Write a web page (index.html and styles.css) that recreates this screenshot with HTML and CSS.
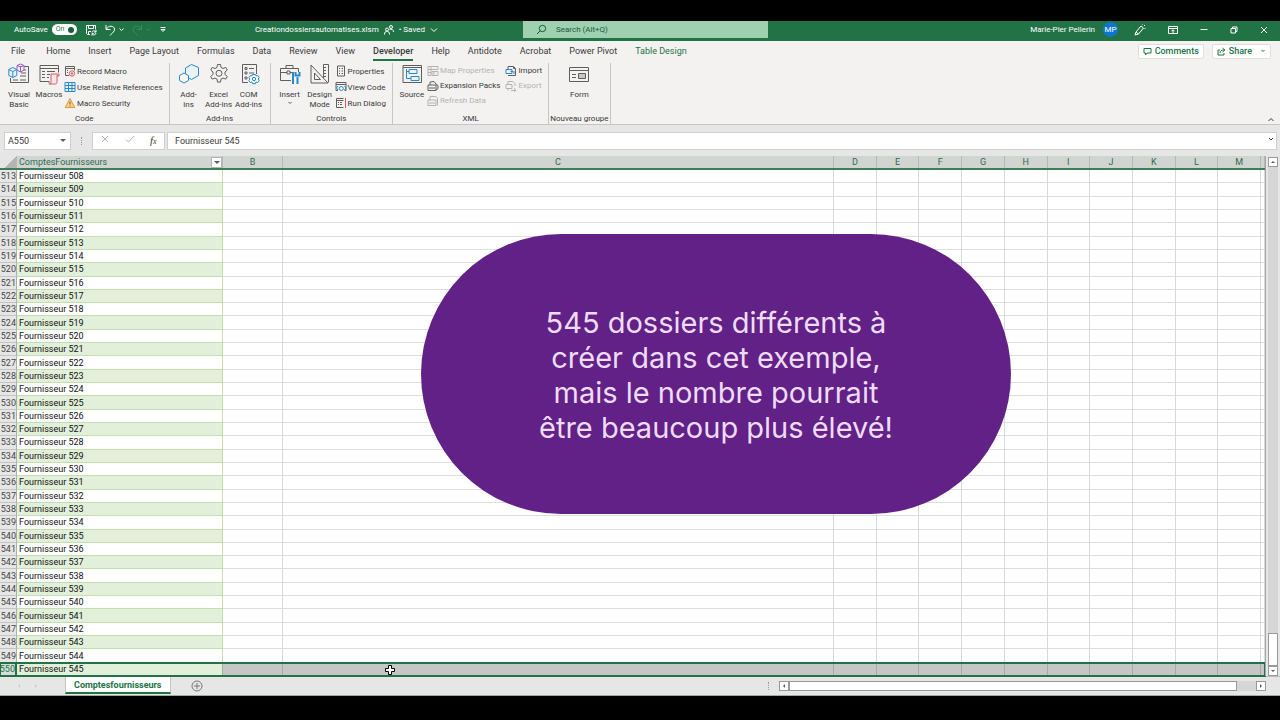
FILE: index.html
```html
<!DOCTYPE html>
<html lang="en">
<head>
    <meta charset="UTF-8">
    <meta name="viewport" content="width=device-width, initial-scale=1.0">
    <title>Creationdossiersautomatises.xlsm</title>
    <link rel="stylesheet" href="styles.css">
</head>
<body>
    <div class="app">
        <header class="title-bar">
            <div class="title-left">
                <label class="autosave">
                    AutoSave
                    <span class="switch">On <input type="checkbox" checked></span>
                </label>
                <button class="icon-btn" title="Save">
                    <svg width="12" height="12" viewBox="0 0 12 12"><path d="M1.5 1.5h9v4M1.5 1.5v8l1 1H5M3.5 1.5v3h5v-3M3.5 10.5V7.5H6M7 8.5a2 2 0 0 1 3.5-1M11 6v2H9M11 9a2 2 0 0 1-3.5 1.2M7 11.5v-1.8h1.8"/></svg>
                </button>
                <button class="icon-btn undo" title="Undo">
                    <svg width="20" height="12" viewBox="0 0 20 12"><path d="M2 1v4.500h4.500M2.300 5.200C4.500 1 10 1.500 10.500 5c.300 2.500-2 3.500-4.500 6.500M15.500 4.500l2 2 2-2"/></svg>
                </button>
                <button class="icon-btn redo" title="Redo" disabled>
                    <svg width="20" height="12" viewBox="0 0 20 12"><path d="M10.500 1v4.500H6M10.200 5.200C8 1 2.500 1.500 2 5c-.300 2.500 2 3.500 4.500 6.500M15.500 4.500l2 2 2-2"/></svg>
                </button>
                <button class="icon-btn" title="Customize Quick Access Toolbar">
                    <svg width="8" height="8" viewBox="0 0 8 8"><path d="M1.500 1.500h5M2 3.500h4L4 5.500z"/></svg>
                </button>
                <div class="doc-title">
                    <span>Creationdossiersautomatises.xlsm</span>
                    <svg width="10" height="10" viewBox="0 0 10 10"><circle cx="3" cy="4.500" r="1.500"/><circle cx="7" cy="2" r="1.500"/><path d="M.500 9.500c0-4.500 5-4.500 5 0M5.500 4.500c2-1 4 0 4 2.500"/></svg>
                    <span>• Saved</span>
                    <svg width="8" height="8" viewBox="0 0 8 8"><path d="M1 2.500l3 3 3-3"/></svg>
                </div>
            </div>
            <label class="search">
                <svg width="11" height="11" viewBox="0 0 11 11"><circle cx="6.500" cy="4.500" r="3.200"/><path d="M4.200 6.800L1 10"/></svg>
                <input type="text" placeholder="Search (Alt+Q)" aria-label="Search">
            </label>
            <div class="title-right">
                <span>Marie-Pier Pellerin</span>
                <span class="avatar">MP</span>
                <button class="icon-btn" title="Ink">
                    <svg width="12" height="12" viewBox="0 0 12 12"><path d="M1 11l1-3 5-6 2.500 2-5 6zM2 8l2.500 2M8 1l.500-.500M10 2l1-1M10.500 4.500h1"/></svg>
                </button>
                <button class="icon-btn" title="Ribbon Display Options">
                    <svg width="10" height="10" viewBox="0 0 10 10"><path d="M.500 1.500h9v7h-9zM.500 3.500h9M5 8V5M3.500 6L5 4.800 6.500 6"/></svg>
                </button>
                <button class="icon-btn" title="Minimize">
                    <svg width="8" height="8" viewBox="0 0 8 8"><path d="M.500 3.500h7"/></svg>
                </button>
                <button class="icon-btn" title="Restore">
                    <svg width="8" height="8" viewBox="0 0 8 8"><path d="M1 2.500h4.500V7H1zM2.500 2.500V1H7v4.500H5.500"/></svg>
                </button>
                <button class="icon-btn" title="Close">
                    <svg width="8" height="8" viewBox="0 0 8 8"><path d="M1 1l6 6M7 1L1 7"/></svg>
                </button>
            </div>
        </header>

        <nav class="tabs">
            <a href="#">File</a>
            <a href="#">Home</a>
            <a href="#">Insert</a>
            <a href="#">Page Layout</a>
            <a href="#">Formulas</a>
            <a href="#">Data</a>
            <a href="#">Review</a>
            <a href="#">View</a>
            <a href="#" class="active">Developer</a>
            <a href="#">Help</a>
            <a href="#">Antidote</a>
            <a href="#">Acrobat</a>
            <a href="#">Power Pivot</a>
            <a href="#" class="contextual">Table Design</a>
            <div class="tab-actions">
                <button>
                    <svg width="9" height="9" viewBox="0 0 9 9"><path d="M1 1.500h7v4.500H4L2.500 8V6H1z"/></svg>
                    Comments
                </button>
                <button>
                    <svg width="9" height="9" viewBox="0 0 9 9"><path d="M3 3H1v5h6V6M3 6c0-2 1.500-3 4-3M5.500 1L8 3 5.500 5"/></svg>
                    Share
                    <svg class="share-arrow" width="6" height="6" viewBox="0 0 6 6"><path d="M1.500 2L3 3.500 4.500 2"/></svg>
                </button>
            </div>
        </nav>

        <section class="ribbon">
            <div class="group">
                <div class="group-body">
                    <button class="big">
                        <svg width="22" height="22" viewBox="0 0 22 22"><path d="M11 3.500h9.500v16h-18V15M12 7h6M13 10h5M12 13h6M5 17h5M12 17h6"/><path class="blue pale" d="M.800 6.500l4-2 4 2v6l-4 2-4-2zM.800 6.500l4 2 4-2M4.800 8.500v6"/><path class="purple pale" d="M9 2.500l3.500-1.500L16 2.500V7l-3.500 2L9 7zM9 2.500L12.500 4 16 2.500M12.500 4v5"/></svg>
                        <span>Visual<br>Basic</span>
                    </button>
                    <button class="big">
                        <svg width="22" height="22" viewBox="0 0 22 22"><path d="M11.500 18.500H2v-16h18.500v7M2 5.500h18.500M4 8.500h3M9 8.500h8M4 11.500h3M9 11.500h3M4 14.500h3M9 14.500h2"/><path class="red pale" d="M13 11h8v2h-2v6.500c0 1-1 1.500-2 1.500h-5.500c1.500-.500 1.500-1 1.500-2zM11 19v1c0 .800.800 1 1.500 1M19 13v-1"/></svg>
                        <span>Macros</span>
                    </button>
                    <div class="small-list">
                        <button><svg width="12" height="12" viewBox="0 0 12 12"><path d="M5 10.500H1.500v-9h9v4M1.500 3.500h9M3 5.500h1M3 7.500h1"/><circle class="red" cx="8" cy="8.500" r="2.700"/><circle class="red solid" cx="8" cy="8.500" r=".800"/></svg>Record Macro</button>
                        <button><svg width="12" height="12" viewBox="0 0 12 12"><path class="pale" stroke="none" d="M1 1h10v9H1z"/><path class="blue" d="M1 1.500h10v9H1zM1 4.500h10M1 7.500h10M4.500 1v9M8 1v9"/></svg>Use Relative References</button>
                        <button><svg width="12" height="12" viewBox="0 0 12 12"><path class="warn" d="M6 1.500l4.800 9H1.200z"/><path d="M6 4.500v3M6 8.500v1"/></svg>Macro Security</button>
                    </div>
                </div>
                <div class="group-name">Code</div>
            </div>

            <div class="group">
                <div class="group-body buttons-only">
                    <button class="big">
                        <svg width="22" height="22" viewBox="0 0 22 22"><path class="blue pale" d="M13.500 1.500l7 3v8l-7 4-6-3.500v-8z"/><path class="blue white" d="M6 10l4.500 2.500v5L6 20l-4.500-2.500v-5z"/></svg>
                        <span>Add-<br>ins</span>
                    </button>
                    <button class="big">
                        <svg width="22" height="22" viewBox="0 0 22 22"><path d="M9.500 1.500h3l.500 3 2 1 2.800-1.100 1.500 2.600-2.300 2v2.500l2.300 2-1.500 2.600-2.800-1-2 1-.500 3h-3l-.500-3-2-1-2.800 1-1.500-2.600 2.300-2V9L2.700 7l1.500-2.600L7 5.500l2-1z"/><circle cx="11" cy="10.300" r="3"/></svg>
                        <span>Excel<br>Add-ins</span>
                    </button>
                    <button class="big">
                        <svg width="22" height="22" viewBox="0 0 22 22"><path d="M10 19.500H4.500v-18h14V11M7 4.500h2v2H7zM11 5.500h5M7 9h2v2H7zM11 10h5M7 14h2v2H7z"/><path class="blue white" d="M14.500 11.500h3l.500 1.500 1.700-.500 1.500 2.300L20 16l1.200 1.300-1.500 2.200L18 19l-.500 1.700h-3L14 19l-1.700.500-1.500-2.200L12 16l-1.200-1.300 1.500-2.200 1.700.500z"/><circle class="blue" cx="16" cy="16" r="1.700"/></svg>
                        <span>COM<br>Add-ins</span>
                    </button>
                </div>
                <div class="group-name">Add-ins</div>
            </div>

            <div class="group">
                <div class="group-body">
                    <button class="big">
                        <svg width="22" height="22" viewBox="0 0 22 22"><path d="M12 17.500H1.500v-12h18V9M7 5V2.500h7V5M1.500 9.500H8M8 8h3v3H8zM11 9.500h2"/><path class="blue thick" d="M14 9v5M14 14v7M18.500 14v7"/><path class="blue thick" d="M16.500 9v3.500h4V9"/></svg>
                        <span>Insert</span>
                        <svg class="drop" width="6" height="6" viewBox="0 0 6 6"><path d="M1.500 2L3 3.500 4.500 2"/></svg>
                    </button>
                    <button class="big">
                        <svg width="22" height="22" viewBox="0 0 22 22"><path d="M2 2v18h17zM5.500 10v6.500h6zM14.500 1.500h5v18M14.500 1.500V15M14.500 4.500H17M14.500 7.500H17M14.500 10.500H17M14.500 13.500H17"/></svg>
                        <span>Design<br>Mode</span>
                    </button>
                    <div class="small-list">
                        <button><svg width="12" height="12" viewBox="0 0 12 12"><path d="M2.500 1h7v10h-7zM4 3.500h1M6.500 3.500H8M4 6h1M6.500 6H8M4 8.500h1M6.500 8.500H8"/></svg>Properties</button>
                        <button><svg width="12" height="12" viewBox="0 0 12 12"><path d="M3 9.500H1v-8h10v8H9.500M1 3.500h10"/><path class="blue" d="M3 5L1.500 7 3 9M9.500 5L11 7 9.500 9"/><circle class="blue" cx="6.300" cy="7.500" r="2"/></svg>View Code</button>
                        <button><svg width="12" height="12" viewBox="0 0 12 12"><path d="M8.500 10.500h-7v-9h7M1.500 3.500h7M3 5.500h1M5 5.500h2M3 7.500h1M5 7.500h2"/><path class="red" d="M10.500 1v10"/></svg>Run Dialog</button>
                    </div>
                </div>
                <div class="group-name">Controls</div>
            </div>

            <div class="group">
                <div class="group-body">
                    <button class="big">
                        <svg width="22" height="22" viewBox="0 0 22 22"><path d="M2 2.500h18.500v17H2zM2 4.500h18.500"/><path class="blue pale" d="M8 6.500h8v4H8zM10 13.500h8v4h-8zM5.500 6v9.500H10M5.500 8.500H8"/></svg>
                        <span>Source</span>
                    </button>
                    <div class="small-list tight">
                        <button disabled><svg width="12" height="12" viewBox="0 0 12 12"><path d="M1 1.500h10v3M1 1.500v9h3M1 4.500h10M4 1v9M5 6.500h6v4H5zM7 6.500v4M1 7.500h3"/></svg>Map Properties</button>
                        <button><svg width="12" height="12" viewBox="0 0 12 12"><path d="M3 5V2l4-.500L9 4M1 5h8v5.500H1zM3 7v2M5 7v2M7 7v2M9 4l2 1.500v3L9 10"/></svg>Expansion Packs</button>
                        <button disabled><svg width="12" height="12" viewBox="0 0 12 12"><path d="M3 5V1.500h6l1.500 2v7M1 5h8v5.500H1zM3 7v2M5 7v2M7 7v2"/></svg>Refresh Data</button>
                    </div>
                    <div class="small-list tight">
                        <button><svg width="12" height="12" viewBox="0 0 12 12"><path d="M3 10.500h7.500v-7l-2-2H3v3M8.500 1.500v2h2"/><path class="blue" d="M1 4.500h6v4H1zM9 9V6M5.500 6.500H8"/></svg>Import</button>
                        <button disabled><svg width="12" height="12" viewBox="0 0 12 12"><path d="M3 10.500V8.500M3 4V1.500h5l2 2V6M1 4.500h6v4H1zM6 10.500h4.500M9 8l2 2.500-2 1"/></svg>Export</button>
                    </div>
                </div>
                <div class="group-name">XML</div>
            </div>

            <div class="group">
                <div class="group-body centered">
                    <button class="big">
                        <svg width="22" height="22" viewBox="0 0 22 22"><path d="M1.500 4.500h19v14h-19zM1.500 7.500h19M4 11.500h4M4 14.500h4"/><path class="grey" d="M10.500 10.500h7v5h-7z"/></svg>
                        <span>Form</span>
                    </button>
                </div>
                <div class="group-name">Nouveau groupe</div>
            </div>
            <button class="collapse" title="Collapse the Ribbon">
                <svg width="8" height="8" viewBox="0 0 8 8"><path d="M1.500 5L4 2.500 6.500 5"/></svg>
            </button>
        </section>

        <div class="formula-bar">
            <div class="name-box">
                <input type="text" value="A550" aria-label="Name Box">
                <button title="Names"><i class="tri down"></i></button>
            </div>
            <span class="dots"></span>
            <div class="fx-box">
                <button title="Cancel" disabled><svg width="10" height="10" viewBox="0 0 10 10"><path d="M2 2l6 6M8 2L2 8"/></svg></button>
                <button title="Enter" disabled><svg width="10" height="10" viewBox="0 0 10 10"><path d="M1 5.500L3.500 8 9 2"/></svg></button>
                <button class="fx" title="Insert Function">f<sub>x</sub></button>
            </div>
            <div class="formula">
                <input type="text" value="Fournisseur 545" aria-label="Formula Bar">
                <button title="Expand"><svg width="8" height="8" viewBox="0 0 8 8"><path d="M2 3l2 2 2-2"/></svg></button>
            </div>
        </div>

        <main class="sheet">
            <table class="grid">
                <thead>
                    <tr>
                        <th class="corner"></th>
                        <th class="col-a">ComptesFournisseurs <button class="filter" title="Filter"><i class="tri down"></i></button></th>
                        <th>B</th>
                        <th>C</th>
                        <th>D</th>
                        <th>E</th>
                        <th>F</th>
                        <th>G</th>
                        <th>H</th>
                        <th>I</th>
                        <th>J</th>
                        <th>K</th>
                        <th>L</th>
                        <th>M</th>
                        <th></th>
                    </tr>
                </thead>
                <tbody id="rows"></tbody>
            </table>
            <div class="v-scroll">
                <button title="Scroll up"><i class="tri up"></i></button>
                <div class="v-track"><div class="v-thumb"></div></div>
                <button title="Scroll down"><i class="tri down"></i></button>
            </div>

            <div class="callout">545 dossiers différents à<br>créer dans cet exemple,<br>mais le nombre pourrait<br>être beaucoup plus élevé!</div>
            <svg class="cursor" width="12" height="12" viewBox="0 0 12 12"><path d="M4.500 1.500h3v3h3v3h-3v3h-3v-3h-3v-3h3z"/></svg>
        </main>

        <footer class="sheet-bar">
            <button class="nav-arrow" title="Previous sheet" disabled><i class="tri left"></i></button>
            <button class="nav-arrow" title="Next sheet" disabled><i class="tri right"></i></button>
            <button class="sheet-tab">Comptesfournisseurs</button>
            <button class="add-sheet" title="New sheet">
                <svg width="12" height="12" viewBox="0 0 12 12"><circle cx="6" cy="6" r="5"/><path d="M6 3v6M3 6h6"/></svg>
            </button>
            <span class="dots"></span>
            <div class="h-scroll">
                <button title="Scroll left"><i class="tri left"></i></button>
                <div class="h-track"><div class="h-thumb"></div></div>
                <button title="Scroll right"><i class="tri right"></i></button>
            </div>
        </footer>
    </div>

    <script src="script.js"></script>
</body>
</html>
```
FILE: styles.css
```css
* {
    box-sizing: border-box;
}

body {
    margin: 0;
    height: 100vh;
    padding: 21px 0 24px;
    background: #000;
    font-family: Roboto, 'Open Sans', sans-serif;
    font-size: 9px;
    line-height: 11px;
    color: #3b3a39;
}

button,
input {
    margin: 0;
    padding: 0;
    border: 0;
    background: none;
    font: inherit;
    color: inherit;
    outline: none;
}

svg {
    flex: none;
    fill: none;
    stroke: currentColor;
}

.app {
    height: 100%;
    display: flex;
    flex-direction: column;
    background: #e6e6e6;
}

/* Title bar */
.title-bar {
    flex: none;
    height: 20px;
    display: grid;
    grid-template-columns: 1fr 245px 512px;
    background: #217346;
    color: #fff;
    font-size: 8px;
}

.title-left,
.title-right {
    display: flex;
    align-items: center;
    padding-bottom: 3px;
    white-space: nowrap;
}

.title-left {
    padding-left: 14px;
}

.icon-btn {
    display: flex;
    align-items: center;
}

.autosave {
    display: flex;
    align-items: center;
    gap: 4px;
    margin-right: 8px;
}

.switch {
    display: flex;
    align-items: center;
    justify-content: space-between;
    width: 25px;
    height: 11px;
    padding: 0 3px 0 4px;
    border-radius: 6px;
    background: #fff;
    color: #217346;
    font-size: 7px;
}

.switch input {
    appearance: none;
    width: 6px;
    height: 6px;
    border-radius: 50%;
    background: #185c37;
}

.undo,
.redo {
    margin-left: 7px;
}

.redo {
    margin-right: 8px;
    color: #3f8b60;
}

.doc-title {
    display: flex;
    align-items: center;
    gap: 5px;
    margin-left: auto;
    margin-right: 85px;
}

.search {
    display: flex;
    align-items: center;
    gap: 9px;
    height: 17px;
    padding-left: 13px;
    background: #9fd0b2;
    color: #185c37;
}

.search input {
    flex: 1;
}

.search input::placeholder {
    color: #185c37;
    opacity: 1;
}

.title-right {
    justify-content: flex-end;
    gap: 22px;
    padding-right: 12px;
}

.avatar {
    width: 15px;
    height: 15px;
    margin-left: -14px;
    margin-right: -6px;
    border-radius: 50%;
    background: #0f75cf;
    line-height: 15px;
    text-align: center;
}

/* Ribbon tabs */
.tabs {
    flex: none;
    height: 20px;
    display: flex;
    align-items: center;
    gap: 18px;
    padding: 0 9px 0 11px;
    background: #f3f2f1;
    white-space: nowrap;
}

.tabs a {
    padding: 5px 0 2px;
    border-bottom: 2px solid transparent;
    color: #3b3a39;
    text-decoration: none;
}

.tabs a:first-child {
    margin-right: 3px;
}

.tabs .active {
    border-color: #217346;
    font-weight: 500;
}

.tabs .contextual {
    color: #217346;
}

.tab-actions {
    display: flex;
    gap: 8px;
    margin-left: auto;
}

.tab-actions button {
    display: flex;
    align-items: center;
    gap: 3px;
    height: 15px;
    padding: 0 4px;
    border: 1px solid #e1dfdd;
    border-radius: 2px;
    background: #fff;
    color: #217346;
    font-weight: 500;
}

.share-arrow {
    margin-left: 5px;
}

/* Ribbon */
.ribbon {
    flex: none;
    height: 64px;
    display: flex;
    background: #f3f2f1;
    border-bottom: 1px solid #c8c6c4;
    font-size: 8px;
}

.group {
    display: flex;
    flex-direction: column;
    justify-content: space-between;
    margin-top: 2px;
    border-right: 1px solid #c8c6c4;
    white-space: nowrap;
}

.group-body {
    display: flex;
    padding: 0 6px 0 4px;
}

.group-body.centered {
    justify-content: center;
    padding: 0 4px;
}

.group-name {
    padding: 0 1px;
    text-align: center;
}

.group svg {
    color: #605e5c;
}

.big {
    display: flex;
    flex-direction: column;
    align-items: center;
    width: 30px;
    line-height: 10px;
}

.big svg {
    margin-bottom: 5px;
}

.small-list {
    display: flex;
    flex-direction: column;
}

.small-list button {
    display: flex;
    align-items: center;
    gap: 1px;
    height: 16px;
}

.small-list.tight button {
    height: 15px;
}

.small-list button:disabled,
.small-list button:disabled svg {
    color: #b5b3b1;
}

.small-list + .small-list {
    margin-left: 5px;
}

.group .blue {
    stroke: #2b88c8;
}

.group .purple {
    stroke: #9a5cc6;
}

.group .red {
    stroke: #d65c68;
}

.group .pale {
    fill: #eaf3fa;
}

.group .red.pale {
    fill: #fbe6e8;
}

.group .white {
    fill: #f8fbfd;
}

.group .solid {
    fill: #d65c68;
}

.group .grey {
    fill: #c8c6c4;
}

.group .warn {
    fill: #fbd28a;
    stroke: #dd9a35;
}

.group .thick {
    stroke-width: 2;
}

.collapse {
    display: flex;
    align-items: flex-end;
    margin-left: auto;
    padding: 0 5px 0 0;
}

/* Formula bar */
.formula-bar {
    flex: none;
    height: 31px;
    display: flex;
    align-items: center;
    padding: 0 3px 0 4px;
}

.name-box,
.fx-box,
.formula {
    display: flex;
    align-items: center;
    height: 18px;
    border: 1px solid #cfcfcf;
    background: #fff;
}

.name-box {
    width: 67px;
    padding: 0 4px 0 3px;
}

.name-box input,
.formula input {
    flex: 1;
    min-width: 0;
    padding-top: 2px;
}

.dots {
    height: 8px;
    border-left: 1px dotted #999;
}

.formula-bar .dots {
    margin: 0 10px;
}

.fx-box {
    justify-content: space-around;
    width: 73px;
    margin-right: 2px;
}

.fx-box button:disabled {
    color: #b5b3b1;
}

.fx {
    font-family: 'Liberation Serif', serif;
    font-size: 11px;
    font-style: italic;
}

.fx sub {
    font-size: 8px;
    vertical-align: baseline;
}

.formula {
    flex: 1;
    padding: 0 1px 0 7px;
}

.tri {
    display: block;
    width: 0;
    height: 0;
    border: 3px solid transparent;
}

.tri.down {
    border-top-color: #605e5c;
    border-bottom: 0;
}

.tri.up {
    border-bottom-color: #605e5c;
    border-top: 0;
}

.tri.left {
    border-right-color: #605e5c;
    border-left: 0;
}

.tri.right {
    border-left-color: #605e5c;
    border-right: 0;
}

/* Sheet */
.sheet {
    position: relative;
    flex: 1;
    min-height: 0;
    display: flex;
}

.grid {
    flex: 1;
    display: flex;
    flex-direction: column;
    background: #fff;
    color: #222;
}

.grid tr {
    display: grid;
    grid-template-columns: 17px 206px 60px 551px repeat(10, 1fr) 4px;
    min-height: 0;
}

.grid thead {
    display: block;
}

.grid thead tr {
    height: 14px;
    border-bottom: 2px solid #3f7d5a;
}

.grid tbody {
    flex: 1;
    min-height: 0;
    display: grid;
    grid-auto-rows: 1fr;
}

.grid th,
.grid td {
    display: flex;
    align-items: center;
    min-width: 0;
    padding: 1px 0 0;
    border-right: 1px solid #d9d9d9;
    white-space: nowrap;
}

.grid td {
    border-bottom: 1px solid #dedede;
}

.grid thead th {
    justify-content: center;
    border-color: #b4bbb7;
    background: #d0d5d2;
    color: #2f6b4b;
    font-weight: 400;
}

.grid thead .corner {
    background: linear-gradient(135deg, #e6e6e6 60%, #b5b5b5 60%);
}

.grid thead .col-a {
    justify-content: space-between;
    padding-left: 2px;
}

.filter {
    display: flex;
    align-items: center;
    justify-content: center;
    width: 11px;
    height: 11px;
    border: 1px solid #b5b5b5;
    background: #fff;
}

.grid tbody th {
    justify-content: flex-end;
    border-bottom: 1px solid #c4c4c4;
    border-right-color: #9fb5a8;
    background: #e6e6e6;
    color: #444;
    font-weight: 400;
}

.grid .name {
    padding-left: 2px;
    border-color: #c3dfae;
    color: #111;
}

.grid .banded .name {
    background: #e2efda;
}

.grid .selected {
    outline: 2px solid #217346;
    outline-offset: -1px;
}

.grid .selected td {
    border-bottom: 0;
    border-right-color: #aaa;
}

.grid .selected td:not(.name) {
    background: #c6c6c6;
}

.grid .selected th {
    background: #d5dbd8;
    border-right: 2px solid #217346;
    border-bottom: 0;
    color: #217346;
}

.v-scroll {
    flex: none;
    width: 15px;
    display: flex;
    flex-direction: column;
    padding: 1px 2px 0;
    border-left: 1px solid #a6a6a6;
}

.v-scroll button,
.h-scroll button {
    flex: none;
    display: flex;
    align-items: center;
    justify-content: center;
    width: 10px;
    height: 10px;
    border: 1px solid #999;
    background: #fff;
}

.v-scroll .tri,
.h-scroll .tri {
    border-width: 2px;
}

.v-track {
    flex: 1;
    display: flex;
    flex-direction: column;
    justify-content: flex-end;
    width: 10px;
    background: #d6d6d6;
}

.v-thumb {
    height: 33px;
    border: 1px solid #999;
    background: #fff;
}

.callout {
    position: absolute;
    top: 78px;
    left: 421px;
    width: 590px;
    height: 280px;
    display: flex;
    align-items: center;
    justify-content: center;
    padding-top: 2px;
    border-radius: 140px;
    background: #612187;
    color: #eedcf6;
    font-family: Inter, sans-serif;
    font-size: 29px;
    font-weight: 400;
    line-height: 35px;
    text-align: center;
}

.cursor {
    position: absolute;
    left: 384px;
    bottom: 0;
    fill: #fff;
    stroke: #000;
}

/* Sheet tabs and horizontal scroll */
.sheet-bar {
    flex: none;
    height: 20px;
    display: flex;
    align-items: center;
    padding-right: 14px;
    border-top: 1px solid #b5c4bb;
    border-bottom: 1px solid #9cab9f;
}

.nav-arrow {
    margin-left: 18px;
    opacity: 0.2;
}

.nav-arrow + .nav-arrow {
    margin-left: 15px;
}

.nav-arrow .tri {
    border-width: 2px;
}

.sheet-tab {
    align-self: flex-start;
    height: 17px;
    margin-left: 28px;
    padding: 2px 8px 0;
    border: 1px solid #c4c4c4;
    border-top: 0;
    border-bottom: 2px solid #217346;
    background: #fff;
    color: #217346;
    font-weight: 700;
}

.add-sheet {
    display: flex;
    margin-left: 20px;
    color: #777;
}

.sheet-bar .dots {
    margin-left: auto;
}

.h-scroll {
    display: flex;
    width: 487px;
    margin-left: 10px;
}

.h-track {
    flex: 1;
    background: #d6d6d6;
}

.h-thumb {
    width: 96%;
    height: 10px;
    border: 1px solid #999;
    background: #fff;
}
```
FILE: script.js
```js
const FIRST_ROW = 513;
const LAST_ROW = 550;
const ROW_OFFSET = 5; // rows above the first supplier
const EMPTY_COLUMNS = 13;

const rows = document.getElementById('rows');

for (let n = FIRST_ROW; n <= LAST_ROW; n++) {
    const tr = document.createElement('tr');
    if (n % 2 === 0) tr.classList.add('banded');
    if (n === LAST_ROW) tr.classList.add('selected');

    tr.innerHTML = `<th scope="row">${n}</th><td class="name">Fournisseur ${n - ROW_OFFSET}</td>` +
        '<td></td>'.repeat(EMPTY_COLUMNS);
    rows.appendChild(tr);
}
```
